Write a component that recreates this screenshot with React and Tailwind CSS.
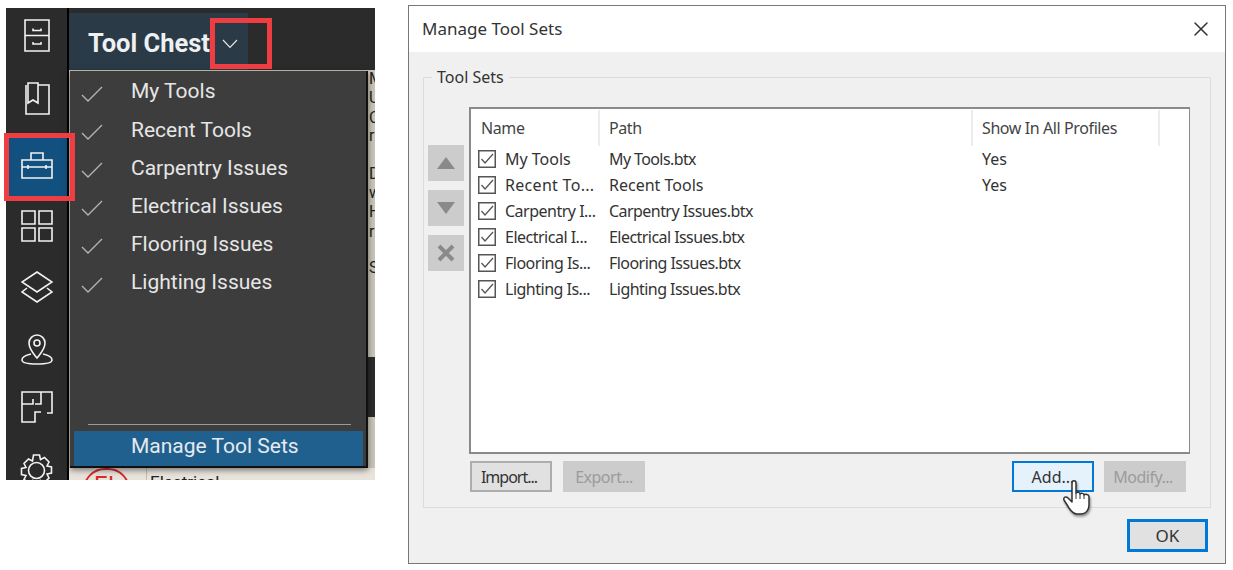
import { X } from 'lucide-react';

const railItems = [
   { h: 'h-[54px]', icon: <Cabinet /> },
   { h: 'h-[72px]', icon: <Bookmarks /> },
   { h: 'h-[60px] mt-[3px] bg-[#12507f] pb-[4px]', icon: <Toolbox /> },
   { h: 'h-[58px]', icon: <Thumbnails /> },
   { h: 'h-[64px]', icon: <Layers /> },
   { h: 'h-[58px]', icon: <Places /> },
   { h: 'h-[60px]', icon: <Spaces /> },
   { h: 'h-[66px]', icon: <Gear /> },
];

const toolSets = ['My Tools', 'Recent Tools', 'Carpentry Issues', 'Electrical Issues', 'Flooring Issues', 'Lighting Issues'];

const rows = [
   { name: 'My Tools', path: 'My Tools.btx', all: 'Yes', nameClass: '', pathClass: 'tracking-[-0.6px]' },
   { name: 'Recent To...', path: 'Recent Tools', all: 'Yes', nameClass: 'tracking-[0.3px]', pathClass: '' },
   { name: 'Carpentry I...', path: 'Carpentry Issues.btx', nameClass: 'tracking-[-0.5px]', pathClass: 'tracking-[-0.55px]' },
   { name: 'Electrical I...', path: 'Electrical Issues.btx', nameClass: 'tracking-[-0.5px]', pathClass: 'tracking-[-0.55px]' },
   { name: 'Flooring Is...', path: 'Flooring Issues.btx', nameClass: 'tracking-[-0.5px]', pathClass: 'tracking-[-0.55px]' },
   { name: 'Lighting Is...', path: 'Lighting Issues.btx', nameClass: 'tracking-[-0.5px]', pathClass: 'tracking-[-0.55px]' },
];

const paperLetters = [
   ['M', 'top-[63px]'],
   ['U', 'top-[82px]'],
   ['C', 'top-[102px]'],
   ['r', 'top-[120px]'],
   ['D', 'top-[158px]'],
   ['w', 'top-[177px]'],
   ['H', 'top-[196px]'],
   ['r', 'top-[216px]'],
   ['S', 'top-[252px]'],
   ['C', 'top-[352px]'],
   ['I', 'top-[381px]'],
];

function Icon({ children, w = 32, h = 34 }) {
   return (
      <svg width={w} height={h} viewBox={`0 0 ${w} ${h}`} fill="none" stroke="#f2f2f2" strokeWidth="1.6">
         {children}
      </svg>
   );
}

function Cabinet() {
   return (
      <Icon w={26} h={33}>
         <path d="M1 1h24v31H1zM1 16.5h24M9 9.5v2h8v-2M9 23v2h8v-2" />
      </Icon>
   );
}

function Bookmarks() {
   return (
      <Icon w={26} h={33}>
         <path d="M14 3h11v29H2V3M4 1h10v20l-5-3-5 3z" />
      </Icon>
   );
}

function Toolbox() {
   return (
      <Icon w={34} h={28}>
         <path d="M2 9h30v18H2zM2 16h30M11 9V2h12v7M8 14v4M26 14v4" />
      </Icon>
   );
}

function Thumbnails() {
   return (
      <Icon w={32} h={32}>
         <path d="M1 1h13v13H1zM18 1h13v13H18zM1 18h13v13H1zM18 18h13v13H18z" />
      </Icon>
   );
}

function Layers() {
   return (
      <Icon w={32} h={32}>
         <path d="M16 1l15 10-15 10L1 11zM6 17l-5 4 15 10 15-10-5-4" />
      </Icon>
   );
}

function Places() {
   return (
      <Icon w={34} h={33}>
         <path d="M17 26c-4-5-8-9-8-15a8 8 0 0 1 16 0c0 6-4 10-8 15z" />
         <circle cx="17" cy="11" r="3" />
         <path d="M11 22c-5 1-9 3-9 6 0 3 7 4 15 4s15-1 15-4c0-3-4-5-9-6" />
      </Icon>
   );
}

function Spaces() {
   return (
      <Icon w={32} h={32}>
         <path d="M20 1H1v30h13V21h6M1 13h11V8M20 1h11v21h-5M20 1v12h-6" />
      </Icon>
   );
}

function Gear() {
   return (
      <Icon w={33} h={33}>
         <circle cx="16.5" cy="16.5" r="8" />
         <path d="M13.5 1h6l1 4.5 4-2 4.500 4.500-2 4 4.500 1v6l-4.500 1 2 4-4.500 4.500-4-2-1 4.500h-6l-1-4.500-4 2L4 25.500l2-4L1.500 20.500v-6l4.500-1-2-4L8.500 5l4 2z" />
      </Icon>
   );
}

function MoveButton({ children }) {
   return <div className="w-[36px] h-[36px] bg-[#cccccc] flex items-center justify-center">{children}</div>;
}

function DialogButton({ label, className }) {
   return (
      <button className={`w-[82px] h-[31px] flex items-center justify-center text-[16px] ${className}`}>{label}</button>
   );
}

function RowCheck() {
   return (
      <svg width="18" height="18" viewBox="0 0 18 18" fill="none" className="shrink-0">
         <rect x="0.75" y="0.75" width="16.500" height="16.500" stroke="#555555" strokeWidth="1.500" />
         <path d="M3.500 9l3.500 4 8-9" stroke="#555555" strokeWidth="1.300" />
      </svg>
   );
}

function ToolChest() {
   return (
      <div className="relative w-[369px] h-[472px] mt-[8px] ml-[6px] shrink-0 font-['Roboto',sans-serif]">
         <div className="relative w-full h-full overflow-hidden bg-[#2b2b2b]">
            <div className="flex h-full">
               <nav className="w-[63px] shrink-0 flex flex-col border-r-2 border-black">
                  {railItems.map((item, i) => (
                     <div key={i} className={`shrink-0 flex items-center justify-center ${item.h}`}>
                        {item.icon}
                     </div>
                  ))}
               </nav>
               <div className="flex-1 flex flex-col min-w-0">
                  <header className="h-[62px] pt-[5px] shrink-0">
                     <div className="w-[179px] h-[57px] bg-[#2a3a47] flex items-center pl-[19px] pt-[4px] gap-[12px]">
                        <span className="text-[25.5px] font-bold text-[#eef0f2] leading-none">Tool Chest</span>
                        <svg width="16" height="10" viewBox="0 0 16 10" fill="none" stroke="#e8e8e8" strokeWidth="1.100">
                           <path d="M1 1l7 7.500L15 1" />
                        </svg>
                     </div>
                  </header>
                  <div className="relative flex-1 bg-[#c9c5b8]"></div>
               </div>
            </div>

            {/* page text peeking out from behind the menu */}
            {paperLetters.map(([letter, top], i) => (
               <span key={i} className={`absolute left-[363px] text-[16px] leading-none text-[#222222] ${top}`}>
                  {letter}
               </span>
            ))}
            <div className="absolute left-[362px] top-[349px] w-[7px] h-[60px] bg-[#2b2b2b]"></div>
            <div className="absolute left-[63px] top-[460px] w-[306px] h-[12px] bg-[#e8e4dc] overflow-hidden">
               <span className="absolute left-[14px] top-0 w-[47px] h-[44px] border-2 border-[#d92b2b] rounded-full"></span>
               <span className="absolute left-[25px] top-[5px] text-[24px] leading-none text-[#d92b2b]">EI</span>
               <div className="absolute left-[77px] top-0 w-px h-[12px] bg-[#bdbdbd]"></div>
               <span className="absolute left-[81px] top-[6px] text-[17px] leading-none text-[#222222]">Electrical</span>
            </div>

            {/* dropdown menu */}
            <div className="absolute left-[64px] top-[63px] w-[298px] h-[397px] bg-[#3d3d3d] border-2 border-l-0 border-t-0 border-[#111111] shadow-[0_2px_6px_rgba(0,0,0,0.5)] flex flex-col">
               <ul className="flex flex-col pt-[2px]">
                  {toolSets.map((name) => (
                     <li key={name} className="h-[38.2px] flex items-center pl-[11px] text-[21px] text-[#e6e6e6]">
                        <svg width="22" height="16" viewBox="0 0 22 16" fill="none" stroke="#b5b5b5" strokeWidth="1.300" className="mt-[3px] mr-[28px] shrink-0">
                           <path d="M1 9l6 6L21 1" />
                        </svg>
                        <span>{name}</span>
                     </li>
                  ))}
               </ul>
               <div className="mt-auto ml-[18px] mr-[15px] h-px bg-[#9a9a9a]"></div>
               <div className="mt-[6px] ml-[4px] mr-[3px] h-[35px] bg-[#20608f] flex items-center pl-[57px] pb-[3px] text-[21px] text-[#e6eaee]">
                  Manage Tool Sets
               </div>
            </div>
         </div>

         {/* red callouts */}
         <div className="absolute left-[-2px] top-[125px] w-[71px] h-[68px] border-[5px] border-[#ee3e42]"></div>
         <div className="absolute left-[204px] top-[10px] w-[62px] h-[51px] border-[5px] border-[#ee3e42]"></div>
      </div>
   );
}

function ManageDialog() {
   return (
      <div className="relative w-[818px] h-[559px] mt-[5px] ml-[33px] shrink-0 flex flex-col bg-[#f0f0f0] border border-[#777777] font-['Noto_Sans',sans-serif] text-[#333333]">
         <div className="h-[46px] shrink-0 bg-white flex items-center justify-between pl-[13px] pr-[12px]">
            <span className="text-[17px]">Manage Tool Sets</span>
            <X size={24} strokeWidth={1.500} color="#333333" />
         </div>
         <fieldset className="mt-[13px] ml-[14px] w-[788px] border border-[#dcdcdc] pl-[4px] pb-[15px]">
            <legend className="ml-[4px] px-[5px] text-[16px] leading-[24px]">Tool Sets</legend>
            <div className="flex pt-[18px]">
               <div className="w-[41px] shrink-0 pt-[38px] flex flex-col gap-[9px]">
                  <MoveButton>
                     <svg width="18" height="12" viewBox="0 0 18 12" fill="#8a8a8a"><path d="M9 0l9 12H0z" /></svg>
                  </MoveButton>
                  <MoveButton>
                     <svg width="18" height="12" viewBox="0 0 18 12" fill="#8a8a8a"><path d="M0 0h18L9 12z" /></svg>
                  </MoveButton>
                  <MoveButton>
                     <svg width="18" height="18" viewBox="0 0 18 18" stroke="#8a8a8a" strokeWidth="4"><path d="M2 2l14 14M16 2L2 16" /></svg>
                  </MoveButton>
               </div>
               <div className="w-[721px]">
                  <div className="h-[347px] bg-white border-2 border-[#8a8a8a] border-r border-b-2">
                     <div className="grid grid-cols-[129px_373px_187px] h-[36px] mt-px text-[16px] tracking-[-0.4px] text-[#444444]">
                        <div className="border-r-2 border-[#ececec] pl-[10px] flex items-center">Name</div>
                        <div className="border-r-2 border-[#ececec] pl-[9px] flex items-center">Path</div>
                        <div className="border-r-2 border-[#ececec] pl-[9px] flex items-center">Show In All Profiles</div>
                     </div>
                     {rows.map((row) => (
                        <div key={row.name} className="grid grid-cols-[129px_373px_187px] h-[26px] items-center text-[16px] whitespace-nowrap">
                           <div className="flex items-center pl-[7px] gap-[9px]">
                              <RowCheck />
                              <span className={row.nameClass}>{row.name}</span>
                           </div>
                           <div className={`pl-[9px] ${row.pathClass}`}>{row.path}</div>
                           <div className="pl-[9px]">{row.all}</div>
                        </div>
                     ))}
                  </div>
                  <div className="flex mt-[7px] pl-[1px] pr-[4px] gap-[11px]">
                     <DialogButton label="Import..." className="bg-[#e1e1e1] border-2 border-[#adadad] tracking-[-1px] pr-[4px]" />
                     <DialogButton label="Export..." className="bg-[#cccccc] text-[#9b9b9b] tracking-[-0.5px]" />
                     <DialogButton label="Add..." className="ml-auto mr-[-1px] bg-[#e5f1fb] border-2 border-[#0078d7]" />
                     <DialogButton label="Modify..." className="bg-[#cccccc] text-[#9b9b9b] tracking-[-0.5px] pr-[4px]" />
                  </div>
               </div>
            </div>
         </fieldset>
         <div className="flex justify-end pr-[17px] mt-[11px]">
            <button className="w-[81px] h-[33px] bg-[#e1e1e1] border-[3px] border-[#0078d7] text-[17px]">OK</button>
         </div>

         {/* mouse pointer over the Add button */}
         <svg
            className="absolute left-[654px] top-[474px] drop-shadow-[1px_2px_1px_rgba(0,0,0,0.4)]"
            width="28"
            height="36"
            viewBox="0 0 28 36"
            fill="white"
            stroke="#333333"
            strokeWidth="1.500"
            strokeLinejoin="round"
         >
            <path d="M9 3c0-3 4-3 4 0v10c1-1 4-1 4 1 1-1 4-1 4 1 1-1 5-1 5 2v8c0 5-3 9-8 9h-4c-4 0-6-3-8-6l-5-8c-1-3 2-4 4-2l4 4z" />
            <path d="M13 13v6M17 14v5M21 15v4" fill="none" strokeWidth="1" />
         </svg>
      </div>
   );
}

export default function App() {
   return (
      <div className="w-[1233px] h-[570px] bg-white flex items-start overflow-hidden">
         <ToolChest />
         <ManageDialog />
      </div>
   );
}
